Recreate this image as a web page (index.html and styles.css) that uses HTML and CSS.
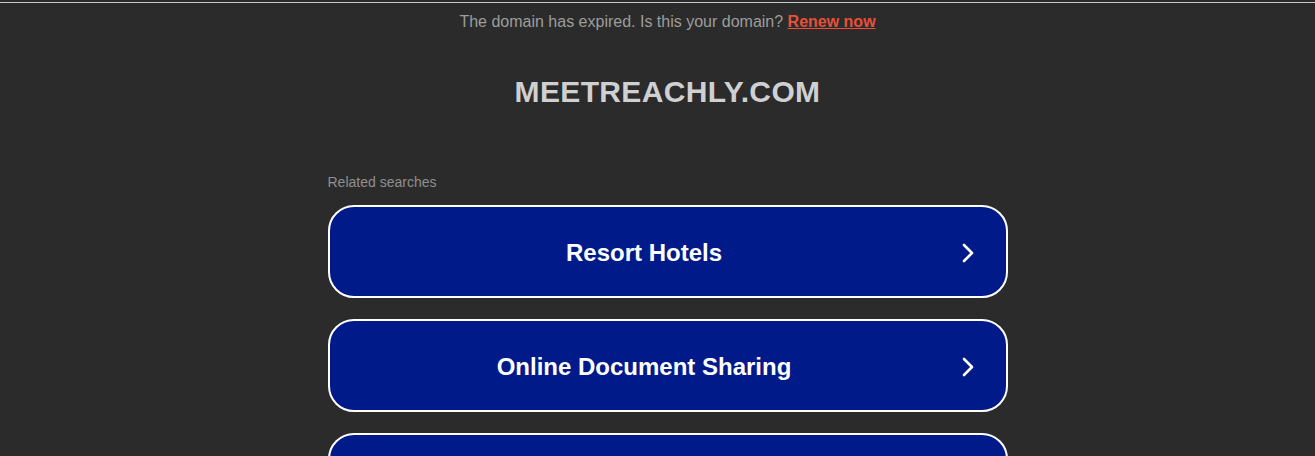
FILE: index.html
```html
<!DOCTYPE html>
<html lang="en">
<head>
    <meta charset="UTF-8">
    <meta name="viewport" content="width=device-width, initial-scale=1.0">
    <title>meetreachly.com</title>
    <link rel="stylesheet" href="styles.css">
</head>
<body>
    <div class="top-line"></div>
    <div class="page">
        <p class="notice">The domain has expired. Is this your domain? <a href="#" class="renew">Renew now</a></p>

        <h1 class="domain">MEETREACHLY.COM</h1>

        <div class="related">
            <p class="related-label">Related searches</p>

            <a href="#" class="search-link">
                <span class="search-text">Resort Hotels</span>
                <svg class="chevron" viewBox="0 0 14 22" width="14" height="22" fill="none" stroke="currentColor" stroke-width="2.6" stroke-linecap="round" stroke-linejoin="round">
                    <polyline points="3 3 11 11 3 19"></polyline>
                </svg>
            </a>

            <a href="#" class="search-link">
                <span class="search-text">Online Document Sharing</span>
                <svg class="chevron" viewBox="0 0 14 22" width="14" height="22" fill="none" stroke="currentColor" stroke-width="2.6" stroke-linecap="round" stroke-linejoin="round">
                    <polyline points="3 3 11 11 3 19"></polyline>
                </svg>
            </a>

            <!-- third result only shows its top edge in the viewport -->
            <a href="#" class="search-link">
                <span class="search-text"></span>
            </a>
        </div>
    </div>
</body>
</html>
```

FILE: styles.css
```css
/* General */
body {
    margin: 0;
    padding: 0;
    background-color: #2b2b2b;
    font-family: "Liberation Sans", Arial, sans-serif;
    overflow: hidden;
}

.top-line {
    height: 1px;
    margin-top: 2px;
    background-color: #c9c9c9;
}

.page {
    padding-left: 20px;
}

/* Expired notice */
.notice {
    margin: 10px 0 0;
    font-size: 16px;
    line-height: 18px;
    color: #9d9d9d;
    text-align: center;
}

.renew {
    color: #e6503b;
    font-weight: bold;
    text-decoration: underline;
}

/* Domain name */
.domain {
    margin: 44px 0 0;
    font-size: 30px;
    line-height: 34px;
    font-weight: bold;
    letter-spacing: 0.35px;
    color: #cfd0d2;
    text-align: center;
}

/* Related searches */
.related {
    width: 680px;
    margin: 0 auto;
}

.related-label {
    margin: 65px 0 15px;
    font-size: 14px;
    line-height: 16px;
    color: #8f8f8f;
}

.search-link {
    display: flex;
    align-items: center;
    box-sizing: border-box;
    height: 93px;
    margin-bottom: 21px;
    padding: 2px 31px 0 20px;
    border: 2px solid #ffffff;
    border-radius: 26px;
    background-color: #011a8a;
    color: #ffffff;
    text-decoration: none;
}

.search-text {
    flex: 1;
    font-size: 24px;
    font-weight: bold;
    text-align: center;
}

.chevron {
    display: block;
    margin-left: 22px;
}
```
